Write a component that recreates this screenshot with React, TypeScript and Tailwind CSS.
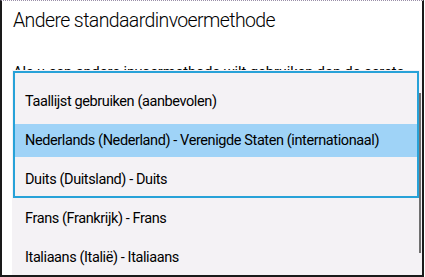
import React from "react";

const rows = [
  "Taallijst gebruiken (aanbevolen)",
  "Nederlands (Nederland) - Verenigde Staten (internationaal)",
  "Duits (Duitsland) - Duits",
  "Frans (Frankrijk) - Frans",
  "Italiaans (Italië) - Italiaans",
];

export default function App() {
  return (
    <div
      className="relative w-[424px] h-[277px] overflow-hidden bg-white border-l-2 border-r-2 border-b-2 border-t border-l-[#1a1a1a] border-r-[#1a1a1a] border-b-[#1a1a1a] border-t-[#9a8fa8] text-black"
      style={{ fontFamily: "Roboto, 'Liberation Sans', sans-serif", borderStyle: "dotted solid solid solid" }}
    >
      <div className="flex flex-col pl-[11px] pt-[8px]">
        <h1 className="text-[19.5px] leading-[24px] font-light tracking-[-0.6px]">Andere standaardinvoermethode</h1>
        <p className="mt-[30px] text-[14.5px] leading-[20px]">
          Als u een andere invoermethode wilt gebruiken dan de eerste
          <br />
          invoermethode in de taallijst, kiest u deze hier.
        </p>
      </div>

      {/* dropdown popup */}
      <div className="absolute left-[10px] right-0 top-[69px] bottom-0 bg-[#f4f2f5]">
        <div className="flex flex-col pt-[12px] pl-[2px] pr-[3px] text-[14.5px] tracking-[-0.4px]">
          {rows.map((r, i) => (
            <div key={i} className="h-[39px] py-[3px]">
              <div
                className={
                  "h-full flex items-center pl-[11px] " + (i === 1 ? "bg-[#9fd3f7]" : "")
                }
              >
                {r}
              </div>
            </div>
          ))}
        </div>
        {/* scrollbar */}
        <div className="absolute left-[407px] top-[23px] w-[2px] h-[160px] bg-[#6f6f6f]" />
        {/* focus box */}
        <div className="absolute left-[1px] top-[1px] w-[406px] h-[127px] border-2 border-[#27a2d8]" />
      </div>
    </div>
  );
}
